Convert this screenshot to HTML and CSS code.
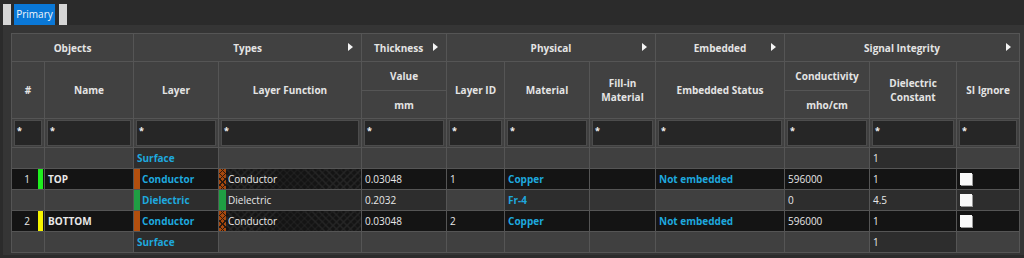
FILE: index.html
```html
<!DOCTYPE html>
<html>
<head>
<meta charset="utf-8">
<link rel="stylesheet" href="styles.css">
</head>
<body>
<div class="app">
  <div class="tabbar">
    <span class="stub"></span>
    <span class="tab">Primary</span>
    <span class="stub"></span>
  </div>
  <div class="panel">
    <table class="grid">
      <colgroup>
        <col style="width:33px"><col style="width:89px"><col style="width:85px"><col style="width:143px">
        <col style="width:85px"><col style="width:58px"><col style="width:85px"><col style="width:66px">
        <col style="width:129px"><col style="width:85px"><col style="width:87px"><col style="width:63px">
      </colgroup>
      <thead>
        <tr class="h1">
          <th colspan="2">Objects</th>
          <th colspan="2" class="exp">Types<i class="arrow"></i></th>
          <th class="exp left">Thickness<i class="arrow"></i></th>
          <th colspan="3" class="exp">Physical<i class="arrow"></i></th>
          <th class="exp">Embedded<i class="arrow"></i></th>
          <th colspan="3" class="exp">Signal Integrity<i class="arrow"></i></th>
        </tr>
        <tr class="h2">
          <th rowspan="2">#</th>
          <th rowspan="2">Name</th>
          <th rowspan="2">Layer</th>
          <th rowspan="2">Layer Function</th>
          <th class="top">Value</th>
          <th rowspan="2">Layer ID</th>
          <th rowspan="2">Material</th>
          <th rowspan="2">Fill-in<br>Material</th>
          <th rowspan="2">Embedded Status</th>
          <th class="top">Conductivity</th>
          <th rowspan="2">Dielectric<br>Constant</th>
          <th rowspan="2">SI Ignore</th>
        </tr>
        <tr class="h3">
          <th>mm</th>
          <th>mho/cm</th>
        </tr>
        <tr class="filter">
          <td><div class="fbox">*</div></td><td><div class="fbox">*</div></td><td><div class="fbox">*</div></td><td><div class="fbox">*</div></td>
          <td><div class="fbox">*</div></td><td><div class="fbox">*</div></td><td><div class="fbox">*</div></td><td><div class="fbox">*</div></td>
          <td><div class="fbox">*</div></td><td><div class="fbox">*</div></td><td><div class="fbox">*</div></td><td><div class="fbox">*</div></td>
        </tr>
      </thead>
      <tbody>
        <tr class="row">
          <td></td><td></td><td class="dk cyan">Surface</td><td></td>
          <td></td><td></td><td></td><td></td>
          <td></td><td></td><td class="dk">1</td><td></td>
        </tr>
        <tr class="row cond">
          <td class="num"><div class="numwrap"><span class="n">1</span><span class="bar green"></span></div></td>
          <td class="bold">TOP</td>
          <td class="cyan"><span class="lbar copper"></span>Conductor</td>
          <td class="hatch"><span class="fbar hcopper"></span>Conductor</td>
          <td>0.03048</td><td>1</td><td class="cyan">Copper</td><td></td>
          <td class="cyan">Not embedded</td><td>596000</td><td>1</td><td><span class="chk"></span></td>
        </tr>
        <tr class="row">
          <td></td><td></td>
          <td class="dk cyan"><span class="lbar diel"></span>Dielectric</td>
          <td class="dk"><span class="fbar diel"></span>Dielectric</td>
          <td class="dk">0.2032</td><td></td><td class="dk cyan">Fr-4</td><td class="mid"></td>
          <td></td><td class="dk">0</td><td class="dk">4.5</td><td class="dk"><span class="chk"></span></td>
        </tr>
        <tr class="row cond">
          <td class="num"><div class="numwrap"><span class="n">2</span><span class="bar yellow"></span></div></td>
          <td class="bold">BOTTOM</td>
          <td class="cyan"><span class="lbar copper"></span>Conductor</td>
          <td class="hatch"><span class="fbar hcopper"></span>Conductor</td>
          <td>0.03048</td><td>2</td><td class="cyan">Copper</td><td></td>
          <td class="cyan">Not embedded</td><td>596000</td><td>1</td><td><span class="chk"></span></td>
        </tr>
        <tr class="row">
          <td></td><td></td><td class="dk cyan">Surface</td><td></td>
          <td></td><td></td><td></td><td></td>
          <td></td><td></td><td class="dk">1</td><td></td>
        </tr>
      </tbody>
    </table>
  </div>
</div>
</body>
</html>
```

FILE: styles.css
```css
html, body {
  margin: 0;
  padding: 0;
  background: #2b2b2b;
  font-family: "Open Sans", "Noto Sans", "Liberation Sans", sans-serif;
  font-size: 10px;
  color: #e6e6e6;
}

.app {
  width: 1024px;
  height: 258px;
  overflow: hidden;
  display: flex;
  flex-direction: column;
}

.tabbar {
  height: 25px;
  display: flex;
  align-items: flex-start;
  gap: 3px;
  padding: 4px 0 0 3px;
  box-sizing: border-box;
}

.stub {
  width: 8px;
  height: 21px;
  background: #d6d6d6;
}

.tab {
  height: 21px;
  width: 41px;
  margin: 0 1px 0 0;
  background: #0a78d7;
  color: #f2f6fb;
  font-size: 10px;
  line-height: 20px;
  text-align: center;
}

.panel {
  flex: 1;
  margin-left: 3px;
  background: #353535;
  padding: 8px 2px 0 8px;
  border-bottom: 3px solid #2b2b2b;
}

.grid {
  table-layout: fixed;
  border-collapse: collapse;
  width: 1009px;
  background: #404040;
  border: 1px solid #555;
}

.grid th {
  position: relative;
  font-weight: 700;
  color: #e4e4e4;
  text-align: center;
  vertical-align: middle;
  border: 1px solid #555;
  padding: 0 2px;
  line-height: 14px;
  background: #414141;
}

.h1 th { height: 27px; }
.h2 th.top { height: 28px; }
.h3 th { height: 27px; }

.arrow {
  position: absolute;
  right: 8px;
  top: 9px;
  width: 0;
  height: 0;
  border-top: 4px solid transparent;
  border-bottom: 4px solid transparent;
  border-left: 5px solid #f4f4f4;
}

th.left { text-align: left; padding-left: 12px; }

.filter td {
  height: 26px;
  padding: 1px 2px;
  border: 1px solid #555;
  background: #404040;
}

.fbox {
  height: 26px;
  background: #262626;
  border: 1px solid #4c4c4c;
  box-sizing: border-box;
  color: #f0f0f0;
  font-size: 9px;
  font-weight: 700;
  line-height: 20px;
  padding-left: 2px;
}

.row td {
  height: 20px;
  padding: 0 3px;
  border: 1px solid #555;
  background: #404040;
  white-space: nowrap;
  overflow: hidden;
  color: #e8e8e8;
  line-height: 20px;
  position: relative;
}

.row td.dk { background: #2d2d2d; }
.row td.mid { background: #343434; }

.row.cond td {
  background: #141414;
}

.cyan { color: #1ea8de !important; font-weight: 700; }
.bold { font-weight: 700; color: #fafafa; }

.num { padding: 0 !important; }
.numwrap {
  display: flex;
  height: 20px;
}
.numwrap .n {
  flex: 1;
  text-align: center;
  padding-left: 4px;
}
.bar { width: 5px; height: 20px; margin-right: 1px; }
.green { background: #1fee1f; }
.yellow { background: #f5f500; }

.lbar, .fbar {
  display: inline-block;
  vertical-align: top;
  height: 20px;
  margin-left: -3px;
}
.lbar { width: 6px; margin-right: 2px; }
.fbar { width: 7px; margin-right: 2px; }
.copper { background: #b24f0e; }
.diel { background: #1f9e43; }

.hcopper {
  background-color: #a8480d;
  background-image:
    repeating-linear-gradient(45deg, transparent 0 3px, #2a1a10 3px 4px),
    repeating-linear-gradient(-45deg, transparent 0 3px, #2a1a10 3px 4px);
}

.row.cond td.hatch {
  background-color: #141414;
  background-image:
    repeating-linear-gradient(45deg, transparent 0 4px, #262626 4px 5px),
    repeating-linear-gradient(-45deg, transparent 0 4px, #262626 4px 5px);
}

.chk {
  display: inline-block;
  vertical-align: middle;
  width: 12px;
  height: 12px;
  background: #fafafa;
  box-shadow: 1px 1px 0 #9a9a9a;
  margin-top: -2px;
}
```
